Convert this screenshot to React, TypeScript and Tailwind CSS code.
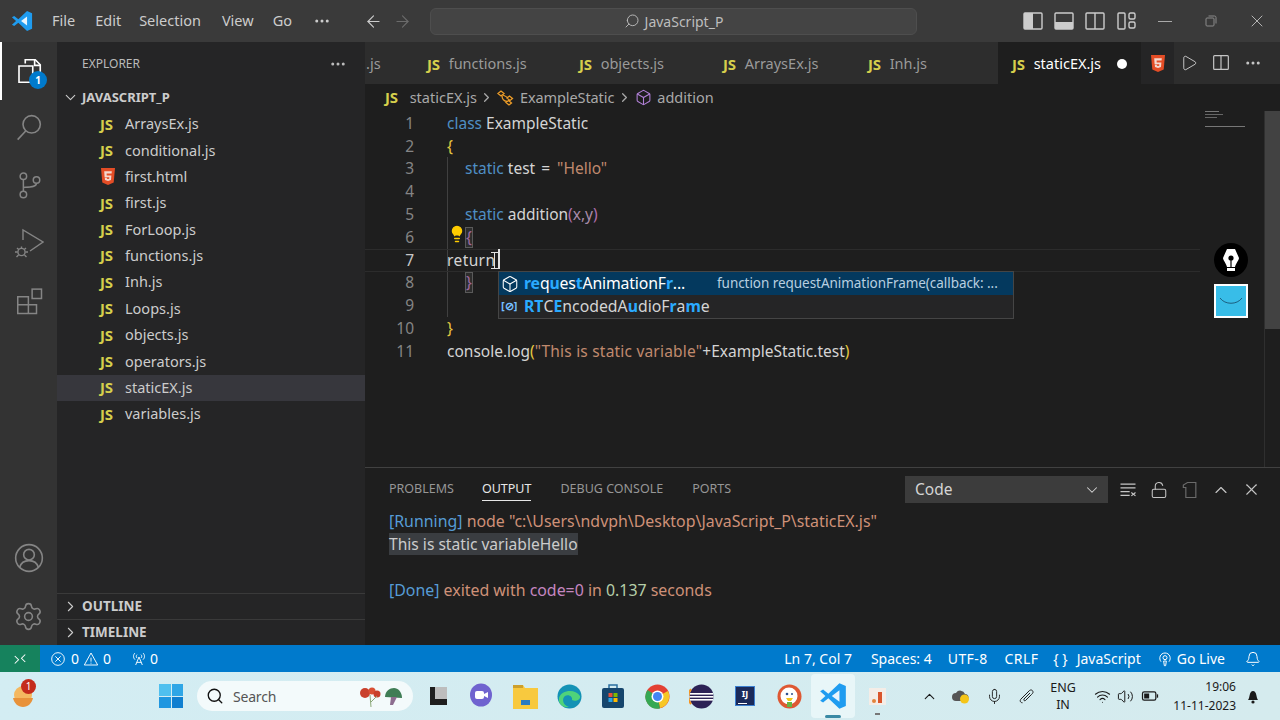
import { ReactNode } from "react";
import { Search, X, ChevronDown, ChevronRight, ChevronUp, ArrowLeft, ArrowRight, Ellipsis, Play, Bell, LockOpen, Mic, Wifi, Volume2, Lightbulb, Box, Settings } from "lucide-react";

const UI = "font-['Noto_Sans','Open_Sans',sans-serif]";

const Js = ({ className = "" }: { className?: string }) => (
  <span className={`font-bold text-[15px] leading-none text-[#d6cf4c] tracking-[-0.3px] ${className}`}>JS</span>
);

const Html5 = () => (
  <svg width="16" height="17" viewBox="0 0 16 17">
    <path d="M1 0h14l-1.3 14.6L8 17l-5.7-2.4z" fill="#e44d26" />
    <path d="M4.2 3.2h7.6l-.2 2.2H6.6l.1 2h4.7l-.4 4.6L8 13l-3-1-.2-2.3h2l.1 1 1.1.3 1.2-.3.1-1.5H4.6z" fill="#f4d9cf" />
  </svg>
);

const files = ["ArraysEx.js", "conditional.js", "first.html", "first.js", "ForLoop.js", "functions.js", "Inh.js", "Loops.js", "objects.js", "operators.js", "staticEX.js", "variables.js"];
const tabs = [
  { name: "functions.js", w: "w-[152px]" },
  { name: "objects.js", w: "w-[144px]" },
  { name: "ArraysEx.js", w: "w-[145px]" },
  { name: "Inh.js", w: "w-[144px]" },
];

const K = ({ c, children }: { c: string; children: ReactNode }) => <span style={{ color: c }}>{children}</span>;
const B = ({ children }: { children: ReactNode }) => <span className="font-bold text-[#2aaaff]">{children}</span>;

const blue = "#4f8fc4";
const str = "#c08a6e";
const pink = "#b070b0";
const gold = "#e6c940";
const txt = "#d4d4d4";

const Matched = ({ children }: { children: ReactNode }) => (
  <span className="border border-[#5a5a5a] bg-[#2d2d2d] text-[#a06aa0] leading-[19px] inline-block">{children}</span>
);

const code: { n: number; pad?: string; body: ReactNode }[] = [
  { n: 1, body: <><K c={blue}>class</K> ExampleStatic</> },
  { n: 2, body: <K c={gold}>{"{"}</K> },
  { n: 3, pad: "pl-[18px]", body: <><K c={blue}>static</K> test<span className="mx-[2px]"> = </span><span className="ml-[1px]" style={{ color: str }}>"Hello"</span></> },
  { n: 4, body: "" },
  { n: 5, pad: "pl-[18px]", body: <><K c={blue}>static</K> addition<K c={pink}>(</K><K c="#a78aa8">x,y</K><K c={pink}>)</K></> },
  { n: 6, pad: "pl-[18px]", body: <Matched>{"{"}</Matched> },
  { n: 7, body: <span className="tracking-[0.4px]">return</span> },
  { n: 8, pad: "pl-[18px]", body: <Matched>{"}"}</Matched> },
  { n: 9, body: "" },
  { n: 10, body: <K c={gold}>{"}"}</K> },
  { n: 11, body: <>console.log<K c={gold}>(</K><span className="tracking-[0.2px]" style={{ color: str }}>"This is static variable"</span>+ExampleStatic.test<K c={gold}>)</K></> },
];

const Stroke = ({ size = 24, w = 1.4, children, className = "" }: { size?: number; w?: number; children: ReactNode; className?: string }) => (
  <svg width={size} height={size} viewBox="0 0 24 24" fill="none" stroke="currentColor" strokeWidth={w} className={className}>
    {children}
  </svg>
);

const VsLogo = ({ size = 22 }: { size?: number }) => (
  <svg width={size} height={size} viewBox="0 0 24 24">
    <path d="M17.5 1 8 10 3.5 6.5 1 8l4.5 4L1 16l2.5 1.5L8 14l9.5 9 5.5-2.5v-17z" fill="#1f9cf0" />
    <path d="M17.5 7 11 12l6.5 5z" fill="#fff" opacity="0.9" />
  </svg>
);

const ActivityBar = () => (
  <div className="w-[57px] shrink-0 bg-[#333333] flex flex-col items-center text-[#858585] relative">
    <div className="absolute left-0 top-0 w-[2px] h-[58px] bg-white" />
    <div className="h-[56px] pt-[2px] flex items-center justify-center text-white relative w-full">
      <Stroke size={30} w={1.3}>
        <path d="M9 6V3h8l4 4v11h-6" />
        <path d="M16.5 3v4.5H21" />
        <path d="M15 8v13H4V8z" />
      </Stroke>
      <span className="absolute left-[29px] top-[29px] w-[18px] h-[18px] rounded-full bg-[#007acc] text-white text-[10px] font-bold flex items-center justify-center">1</span>
    </div>
    <div className="h-[58px] flex items-center justify-center">
      <Stroke size={32} w={1.2}>
        <circle cx="14" cy="10" r="6.5" />
        <path d="M9.5 15 3.5 21.5" />
      </Stroke>
    </div>
    <div className="h-[58px] flex items-center justify-center">
      <Stroke size={30} w={1.2}>
        <circle cx="7.5" cy="5" r="2.6" />
        <circle cx="7.5" cy="19.5" r="2.6" />
        <circle cx="18" cy="8" r="2.6" />
        <path d="M7.5 7.6v9.3M18 10.6c0 3-5 3-10.5 3.4" />
      </Stroke>
    </div>
    <div className="h-[58px] flex items-center justify-center">
      <svg width="30" height="30" viewBox="0 0 30 30" fill="none" stroke="currentColor" strokeWidth="1.4">
        <path d="M9 12V2l20 12-13 9" />
        <circle cx="7.5" cy="24" r="3.6" />
        <path d="M7.5 18.5v2M3 20l1.7 1.5M12 20l-1.7 1.5M1 24h2.5M11.5 24H14M2.5 29l2-2M12.5 29l-2-2" />
      </svg>
    </div>
    <div className="h-[58px] flex items-center justify-center">
      <Stroke size={30} w={1.2}>
        <path d="M3 8.5h8.5V15H18v7H3zM3 15h8.5v7" />
        <rect x="14.5" y="2.5" width="7.5" height="7.5" />
      </Stroke>
    </div>
    <div className="flex-1" />
    <div className="h-[58px] flex items-center justify-center">
      <Stroke size={32} w={1.2}>
        <circle cx="12" cy="12" r="10" />
        <circle cx="12" cy="9.5" r="4" />
        <path d="M5 19c1-3.5 4-5 7-5s6 1.5 7 5" />
      </Stroke>
    </div>
    <div className="h-[58px] flex items-center justify-center">
      <Settings size={31} strokeWidth={1.2} />
    </div>
  </div>
);

const Sidebar = () => (
  <div className="w-[308px] shrink-0 bg-[#252526] flex flex-col text-[#cccccc]">
    <div className="h-[42px] flex items-center justify-between pt-[2px] pl-[25px] pr-[18px] text-[12px] text-[#bbbbbb]">
      <span>EXPLORER</span>
      <Ellipsis size={18} />
    </div>
    <div className="h-[26px] pt-[1px] flex items-center pl-[5px] font-bold text-[13px]">
      <ChevronDown size={17} strokeWidth={1.5} className="mr-[3px]" />
      <span>JAVASCRIPT_P</span>
    </div>
    <div className="flex flex-col pt-[1px]">
      {files.map((f) => (
        <div key={f} className={`h-[26.36px] flex items-center pl-[43px] text-[14.5px] ${f === "staticEX.js" ? "bg-[#37373d]" : ""}`}>
          <span className="w-[25px] flex items-center">{f.endsWith("html") ? <Html5 /> : <Js />}</span>
          <span>{f}</span>
        </div>
      ))}
    </div>
    <div className="flex-1" />
    <div className="h-[26px] border-t border-[#3a3a3a] flex items-center pl-[5px] font-bold text-[13.5px]">
      <ChevronRight size={17} strokeWidth={1.5} className="mr-[3px]" />
      OUTLINE
    </div>
    <div className="h-[26px] border-t border-[#3a3a3a] flex items-center pl-[5px] font-bold text-[13.5px]">
      <ChevronRight size={17} strokeWidth={1.5} className="mr-[3px]" />
      TIMELINE
    </div>
  </div>
);

const TabBar = () => (
  <div className="h-[42px] bg-[#2d2d2d] flex items-center text-[14.5px] text-[#9a9a9a] shrink-0">
    <div className="w-[48px] h-full flex items-center pl-[1px] pt-[2px]">.js</div>
    {tabs.map((t) => (
      <div key={t.name} className={`${t.w} h-full flex items-center pl-[14px] pt-[2px]`}>
        <Js className="mr-[9px]" />
        {t.name}
      </div>
    ))}
    <div className="w-[143px] h-full bg-[#1e1e1e] flex items-center pl-[14px] pt-[2px] text-white">
      <Js className="mr-[9px]" />
      staticEX.js
      <span className="ml-[16px] w-[10px] h-[10px] rounded-full bg-white" />
    </div>
    <div className="w-[33px] h-full bg-[#252526] flex items-center justify-center"><Html5 /></div>
    <div className="flex-1 flex items-center text-[#c5c5c5] pl-[6px] gap-[12px]">
      <Play size={18} strokeWidth={1.3} />
      <Stroke size={22} w={1.3}>
        <rect x="4" y="4" width="16" height="15" rx="1" />
        <path d="M12 4v15" />
      </Stroke>
      <Ellipsis size={18} />
    </div>
  </div>
);

const Breadcrumb = () => (
  <div className="h-[27px] flex items-center pl-[20px] text-[14.5px] text-[#a9a9a9] shrink-0">
    <Js className="mr-[12px]" />
    staticEX.js
    <ChevronRight size={15} className="mx-[2px]" />
    <svg width="18" height="16" viewBox="0 0 18 16" fill="none" stroke="#ee9d28" strokeWidth="1.3" className="mr-[3px]">
      <path d="M2 3.5 5 1l3 2.5L5 6zM11 8l2.5-2 3 2.5-2.5 2zM10 12.5l2.5-2 3 2.5-2.5 2z" />
      <path d="M7 5c2 1 3 1.5 4.5 2.5M6 5.5c0 3 2 5.5 5 6" />
    </svg>
    <span className="ml-[3px] tracking-[-0.1px]">ExampleStatic</span>
    <ChevronRight size={15} className="mx-[3px]" />
    <Box size={17} strokeWidth={1.5} className="text-[#b180d7] mr-[5px]" />
    addition
  </div>
);

const Suggest = () => (
  <div className="absolute left-[133px] top-[160px] w-[516px] h-[48px] bg-[#252526] border border-[#454545] text-[15.8px] text-[#d4d4d4] z-10">
    <div className="h-[23px] bg-[#04395e] flex items-center whitespace-nowrap text-white">
      <Box size={18} strokeWidth={1.4} className="ml-[2px] mr-[5px] shrink-0" />
      <span className="w-[193px] shrink-0 tracking-[-0.15px]"><B>re</B>q<B>u</B>es<B>t</B>AnimationF<B>r</B>...</span>
      <span className="text-[13.5px] tracking-[-0.05px] text-[#b8cfe0]">function requestAnimationFrame(callback: ...</span>
    </div>
    <div className="h-[23px] flex items-center whitespace-nowrap">
      <span className="w-[18px] ml-[2px] mr-[5px] text-[#75beff] text-[11px] font-bold">[⊘]</span>
      <span><B>RT</B>C<B>E</B>ncodedA<B>u</B>dioF<B>r</B>a<B>m</B>e</span>
    </div>
  </div>
);

const Editor = () => (
  <div className="flex-1 relative bg-[#1e1e1e] overflow-hidden">
    {/* indent guide */}
    <div className="absolute left-[82px] top-[46px] w-[1px] h-[160px] bg-[#404040]" />
    <div className="relative flex flex-col pt-[1px] text-[15.5px] whitespace-nowrap" style={{ color: txt }}>
      {code.map((l) => (
        <div key={l.n} className={`h-[22.8px] flex items-center ${l.n === 7 ? "border-y border-[#2c2c2c] w-[835px]" : ""}`}>
          <span className={`w-[49px] text-right ${l.n === 7 ? "text-[#c6c6c6]" : "text-[#858585]"}`}>{l.n}</span>
          <span className={`ml-[33px] ${l.pad ?? ""}`}>{l.body}</span>
        </div>
      ))}
    </div>
    {/* lightbulb + text cursor + mouse i-beam */}
    <Lightbulb size={18} strokeWidth={2} className="absolute left-[83px] top-[114px] text-[#ffcc00] fill-[#ffcc00]" />
    <div className="absolute left-[133px] top-[138px] w-[2px] h-[20px] bg-[#e0e0e0]" />
    <div className="absolute left-[126px] top-[141px] w-[7px] h-[17px] border-y border-[#e0e0e0] flex justify-center">
      <div className="w-[1px] h-full bg-[#e0e0e0]" />
    </div>
    <Suggest />
    {/* minimap */}
    <div className="absolute left-[840px] top-[0px] w-[40px] h-[16px] flex flex-col gap-[2px]">
      <div className="w-[14px] h-[1px] bg-[#777]" />
      <div className="w-[18px] h-[1px] bg-[#666]" />
      <div className="w-[12px] h-[1px] bg-[#666]" />
      <div className="w-[40px] h-[1px] mt-[6px] bg-[#777]" />
    </div>
    {/* floating widgets */}
    <div className="absolute left-[849px] top-[132px] w-[34px] h-[34px] rounded-full bg-black flex items-center justify-center">
      <svg width="18" height="24" viewBox="0 0 18 24">
        <path d="M5 1h8l4 9c0 2-3 5-4 9H5C4 15 1 12 1 10z" fill="#fff" />
        <rect x="5" y="20" width="8" height="3" fill="#fff" />
        <circle cx="9" cy="10" r="2.6" fill="#000" />
        <path d="M8.4 11h1.2v8H8.4z" fill="#000" />
      </svg>
    </div>
    <div className="absolute left-[849px] top-[173px] w-[34px] h-[34px] bg-[#38bde8] border-2 border-white flex items-center justify-center">
      <svg width="26" height="10" viewBox="0 0 26 10" fill="none" stroke="#1c5f80" strokeWidth="1"><path d="M2 2c5 7 17 7 22 0" /></svg>
    </div>
    {/* scrollbar */}
    <div className="absolute right-0 top-0 h-full w-[16px] border-l border-[#2f2f2f]">
      <div className="h-[218px] bg-[#424242]" />
    </div>
  </div>
);

const Panel = () => (
  <div className="h-[178px] shrink-0 bg-[#1e1e1e] border-t border-[#414141] flex flex-col">
    <div className="h-[43px] shrink-0 flex items-center pl-[24px] text-[12.5px] text-[#969696] relative">
      <span className="mr-[28px]">PROBLEMS</span>
      <span className="mr-[29px] text-[#e7e7e7] border-b border-[#e7e7e7] pb-[2px] translate-y-[1px]">OUTPUT</span>
      <span className="mr-[29px]">DEBUG CONSOLE</span>
      <span>PORTS</span>
      <div className="ml-auto flex items-center text-[#c5c5c5]">
        <div className="w-[203px] h-[27px] bg-[#3c3c3c] flex items-center justify-between pl-[10px] pr-[7px] text-[15.5px] text-[#d4d4d4] mr-[4px]">
          <span>Code</span>
          <ChevronDown size={18} strokeWidth={1.4} />
        </div>
        <div className="w-[31px] flex justify-center">
          <Stroke size={20} w={1.4}>
            <path d="M3 5h18M3 9.5h18M3 14h11M3 18.5h11M16 15l5 4M21 15l-5 4" />
          </Stroke>
        </div>
        <div className="w-[31px] flex justify-center"><LockOpen size={18} strokeWidth={1.4} /></div>
        <div className="w-[31px] flex justify-center text-[#6b6b6b]">
          <Stroke size={20} w={1.4}>
            <path d="M9 3h10v18H7V9H4V6z" />
          </Stroke>
        </div>
        <div className="w-[31px] flex justify-center"><ChevronUp size={20} strokeWidth={1.4} /></div>
        <div className="w-[31px] flex justify-center mr-[13px]"><X size={19} strokeWidth={1.4} /></div>
      </div>
    </div>
    <div className="-mt-[1px] pl-[24px] text-[15.9px] leading-[23px] text-[#ce9178] whitespace-nowrap">
      <div><K c="#569cd6">[Running]</K> node "c:\Users\ndvph\Desktop\JavaScript_P\staticEX.js"</div>
      <div><span className="bg-[#3a3d41] text-[#cccccc] text-[15.6px]">This is static variableHello</span></div>
      <div className="h-[23px]" />
      <div><K c="#569cd6">[Done]</K> exited with <K c="#c586c0">code=0</K> in <K c="#b5cea8">0.137</K> seconds</div>
    </div>
  </div>
);

const StatusBar = () => (
  <div className="h-[27px] shrink-0 bg-[#007acc] text-white text-[14px] flex items-center">
    <div className="w-[40px] h-full bg-[#16825d] flex items-center justify-center">
      <Stroke size={18} w={1.4}>
        <path d="M5 8l5 5-5 5M19 6l-5 5 5 5" />
      </Stroke>
    </div>
    <div className="flex items-center pl-[10px]">
      <Stroke size={16} w={1.4}><circle cx="12" cy="12" r="9.5" /><path d="M8 8l8 8M16 8l-8 8" /></Stroke>
      <span className="ml-[5px]">0</span>
      <Stroke size={16} w={1.4} className="ml-[4px]"><path d="M12 3l10 18H2zM12 10v6M12 17.5v1.5" /></Stroke>
      <span className="ml-[4px]">0</span>
      <Stroke size={16} w={1.4} className="ml-[20px]"><path d="M12 9l-5 12M12 9l5 12M8.5 17h7M6 3c-3 3-3 7 0 10M18 3c3 3 3 7 0 10M9 5.5c-1.5 1.5-1.5 3.5 0 5M15 5.5c1.5 1.5 1.5 3.5 0 5" /></Stroke>
      <span className="ml-[3px]">0</span>
    </div>
    <div className="ml-auto flex items-center pr-[19px]">
      <span className="mr-[19px]">Ln 7, Col 7</span>
      <span className="mr-[16px]">Spaces: 4</span>
      <span className="mr-[17px] tracking-[0.4px]">UTF-8</span>
      <span className="mr-[15px] tracking-[0.4px]">CRLF</span>
      <span className="mr-[9px]">{"{ }"}</span>
      <span className="mr-[16px]">JavaScript</span>
      <Stroke size={16} w={1.5} className="mr-[4px]"><circle cx="12" cy="10" r="3" /><path d="M6 16c-4-5-1-13 6-13s10 8 6 13M10 15h4l-1 7h-2z" /></Stroke>
      <span className="mr-[20px]">Go Live</span>
      <Bell size={16} strokeWidth={1.5} />
    </div>
  </div>
);

const Slot = ({ children, active }: { children: ReactNode; active?: boolean }) => (
  <div className={`w-[44px] h-[44px] shrink-0 flex items-center justify-center rounded-[4px] relative ${active ? "bg-[#e8f6f8]" : ""}`}>{children}</div>
);

const Taskbar = () => (
  <div className="h-[48px] shrink-0 bg-gradient-to-r from-[#d3edf3] to-[#d5ebee] text-[#1a1a1a] flex items-center relative">
    {/* weather */}
    <div className="w-[46px] shrink-0 flex justify-center relative">
      <svg width="24" height="24" viewBox="0 0 24 24">
        <circle cx="12" cy="11" r="9" fill="#f4b860" />
        <path d="M2 14h20c-1 5-5 9-10 9S3 19 2 14z" fill="#e8923a" />
      </svg>
      <span className="absolute left-[21px] top-[-5px] w-[15px] h-[15px] rounded-full bg-[#c42b1c] text-white text-[10px] flex items-center justify-center">1</span>
    </div>
    {/* start */}
    <div className="ml-[113px] shrink-0 grid grid-cols-2 gap-[1px] w-[24px] h-[24px]">
      <div className="bg-[#4fc0ef]" />
      <div className="bg-[#2ea6e6]" />
      <div className="bg-[#1f97e0]" />
      <div className="bg-[#0f7fd0]" />
    </div>
    {/* search pill */}
    <div className="ml-[14px] w-[216px] shrink-0 h-[30px] rounded-full bg-[#f3fafb] flex items-center pl-[9px] text-[14px] text-[#555] tracking-[-0.2px]">
      <Search size={18} strokeWidth={1.8} className="text-[#111] mr-[9px]" />
      Search
      <svg width="46" height="24" viewBox="0 0 46 24" className="ml-auto mr-[10px]">
        <circle cx="8" cy="9" r="5" fill="#c9402c" />
        <circle cx="15" cy="7" r="3.5" fill="#d94f33" />
        <circle cx="20" cy="10" r="3.5" fill="#c9402c" />
        <path d="M13 11l1 12M20 12l-6 6" stroke="#8aa878" fill="none" />
        <path d="M28 13c0-6 5-9 9-9 4 0 8 4 8 10z" fill="#3f7d55" />
        <path d="M34 13h6l-4 8h-3z" fill="#8c6d8f" />
      </svg>
    </div>
    <div className="ml-[2px] flex items-center">
      <Slot>
        <div className="w-[17px] h-[18px] relative bg-[#1e1e1e] ml-[2px]"><div className="absolute right-0 top-0 w-[12px] h-[12px] bg-[#bdbdbd]" /></div>
      </Slot>
      <Slot>
        <svg width="24" height="26" viewBox="0 0 24 26"><ellipse cx="12" cy="12" rx="11" ry="11.5" fill="#6f63cf" /><rect x="6" y="8" width="9" height="8" rx="2" fill="#fff" /><path d="M15 11l4-2v6l-4-2z" fill="#fff" /></svg>
      </Slot>
      <Slot>
        <svg width="25" height="25" viewBox="0 0 25 25"><path d="M0 1h10l2 3h13v21H0z" fill="#f8c93e" /><rect x="8" y="16" width="9" height="5" fill="#2a7bc2" /><rect x="0" y="1" width="10" height="3" fill="#cda02c" /></svg>
      </Slot>
      <Slot>
        <svg width="25" height="25" viewBox="0 0 25 25"><circle cx="12.5" cy="12.5" r="12" fill="#1392b5" /><path d="M2 14C4 6 18 4 23 12c1 4-5 6-8 4 1-3-3-6-7-4-3 2-3 9 4 11-6 1-11-3-10-9z" fill="#4fd37a" /></svg>
      </Slot>
      <Slot>
        <svg width="24" height="26" viewBox="0 0 24 26"><path d="M8 5V2h8v3" fill="none" stroke="#2b6fa0" strokeWidth="1.5" /><rect x="1" y="5" width="22" height="20" rx="2" fill="#16466d" /><rect x="7.5" y="10" width="4" height="4" fill="#e8503a" /><rect x="12.5" y="10" width="4" height="4" fill="#7fba00" /><rect x="7.5" y="15" width="4" height="4" fill="#2aa5e8" /><rect x="12.5" y="15" width="4" height="4" fill="#ffb900" /></svg>
      </Slot>
      <Slot>
        <svg width="25" height="25" viewBox="0 0 25 25"><circle cx="12.5" cy="12.5" r="12" fill="#e34133" /><path d="M12.5 12.5 23 7a12 12 0 0 1-8 17z" fill="#f7c726" /><path d="M12.5 12.5 15 24.5A12 12 0 0 1 2.5 6z" fill="#35a853" /><circle cx="12.5" cy="12.5" r="6" fill="#fff" /><circle cx="12.5" cy="12.5" r="4.5" fill="#4285f4" /></svg>
      </Slot>
      <Slot>
        <svg width="25" height="25" viewBox="0 0 25 25"><circle cx="12.5" cy="12.5" r="12" fill="#2c2255" /><path d="M2 5a12 12 0 0 0 0 15" fill="none" stroke="#f7941e" strokeWidth="2" /><rect x="1" y="9" width="23" height="1.6" fill="#fff" /><rect x="0.5" y="12" width="24" height="1.6" fill="#fff" /><rect x="1" y="15" width="23" height="1.6" fill="#fff" /></svg>
      </Slot>
      <Slot>
        <div className="w-[20px] h-[20px] bg-[#1a2a5a] border border-[#3b7fd0] text-white text-[9px] font-bold flex flex-col items-center leading-none pt-[2px]">IJ<div className="w-[9px] h-[1px] bg-white mt-[5px] self-start ml-[2px]" /></div>
      </Slot>
      <Slot>
        <svg width="25" height="25" viewBox="0 0 25 25"><circle cx="12.5" cy="12.5" r="12" fill="#de5833" /><circle cx="12" cy="12" r="8.5" fill="#fff" /><circle cx="10" cy="10" r="1.3" fill="#2d4f8e" /><circle cx="15" cy="10" r="1" fill="#2d4f8e" /><path d="M9 14h7l-2 3h-3z" fill="#f5c518" /><path d="M10 18h5v5h-5z" fill="#68b344" /></svg>
      </Slot>
      <Slot active>
        <VsLogo size={28} />
        <div className="absolute bottom-[0px] left-[14px] w-[16px] h-[3px] rounded bg-[#3a8aa5]" />
      </Slot>
      <Slot>
        <div className="w-[17px] h-[17px] bg-[#f4ede7] flex items-end justify-center gap-[2px] pb-[2px]">
          <div className="w-[4px] h-[4px] rounded-full bg-[#e2843b]" />
          <div className="w-[4px] h-[11px] bg-[#d9552b]" />
        </div>
        <div className="absolute bottom-[3px] left-[20px] w-[5px] h-[2px] bg-[#777]" />
      </Slot>
    </div>
    <div className="ml-auto flex items-center pr-[20px]">
      <ChevronUp size={17} strokeWidth={1.6} className="mr-[14px]" />
      <svg width="18" height="16" viewBox="0 0 18 16" className="mr-[16px]"><path d="M4 13a4 4 0 0 1 0-8 5 5 0 0 1 9 1 3.5 3.5 0 0 1 0 7z" fill="#555" /><circle cx="12.5" cy="11" r="4.5" fill="#f5c518" /></svg>
      <Mic size={17} strokeWidth={1.3} className="mr-[15px]" />
      <Stroke size={18} w={1.3} className="mr-[8px]"><path d="M6 21c-3 0-4-3-2-5L15 5c2-2 5-1 5 2 0 1-1 2-2 3l-8 8c-1 1-3 0-2-2l8-8" /></Stroke>
      <div className="w-[38px] text-center text-[12.5px] leading-[17px] mr-[12px]">ENG<br />IN</div>
      <Wifi size={17} strokeWidth={1.5} className="mr-[6px]" />
      <Volume2 size={17} strokeWidth={1.4} className="mr-[6px]" />
      <Stroke size={20} w={1.5} className="mr-[6px]"><rect x="3" y="7" width="16" height="10" rx="2" /><rect x="5" y="9" width="6" height="6" fill="currentColor" stroke="none" /><path d="M21 10v4" /></Stroke>
      <div className="w-[70px] text-right text-[12px] leading-[19px] mr-[10px]">19:06<br />11-11-2023</div>
      <svg width="14" height="18" viewBox="0 0 14 18"><path d="M2 13c2-2 1-9 5-9s3 7 5 9z" fill="#1a1a1a" /><circle cx="7" cy="15" r="1.6" fill="#1a1a1a" /></svg>
    </div>
  </div>
);

const App = () => (
  <div className={`w-[1280px] h-[720px] overflow-hidden flex flex-col bg-[#1e1e1e] ${UI}`}>
    <div className="h-[42px] shrink-0 bg-[#3a3a3a] flex items-center text-[14.5px] text-[#cccccc]">
      <div className="w-[44px] flex justify-center"><VsLogo /></div>
      <div className="flex items-center">
        <span className="ml-[8px]">File</span>
        <span className="ml-[20px]">Edit</span>
        <span className="ml-[18px]">Selection</span>
        <span className="ml-[21px]">View</span>
        <span className="ml-[19px]">Go</span>
        <Ellipsis size={18} className="ml-[21px]" />
      </div>
      <ArrowLeft size={19} strokeWidth={1.4} className="ml-[33px]" />
      <ArrowRight size={19} strokeWidth={1.4} className="ml-[10px] text-[#6b6b6b]" />
      <div className="ml-[18px] w-[487px] h-[27px] rounded-[6px] bg-[#444444] border border-[#4e4e4e] flex items-center justify-center text-[14px] text-[#bdbdbd]">
        <Search size={16} strokeWidth={1.4} className="mr-[5px] -scale-x-100" />
        JavaScript_P
      </div>
      <div className="ml-auto flex items-center text-[#cccccc]">
        <svg width="20" height="18" viewBox="0 0 20 18" className="mr-[11px]"><rect x="1" y="1" width="18" height="16" rx="1" fill="none" stroke="currentColor" strokeWidth="1.4" /><rect x="1" y="1" width="9" height="16" fill="currentColor" /></svg>
        <svg width="20" height="18" viewBox="0 0 20 18" className="mr-[11px]"><rect x="1" y="1" width="18" height="16" rx="1" fill="none" stroke="currentColor" strokeWidth="1.4" /><rect x="1" y="10" width="18" height="7" fill="currentColor" /></svg>
        <svg width="20" height="18" viewBox="0 0 20 18" className="mr-[12px]"><rect x="1" y="1" width="18" height="16" rx="1" fill="none" stroke="currentColor" strokeWidth="1.4" /><path d="M10 1v16" stroke="currentColor" strokeWidth="1.4" /></svg>
        <svg width="20" height="18" viewBox="0 0 20 18" fill="none" stroke="currentColor" strokeWidth="1.4" className="mr-[21px]"><rect x="1" y="1" width="7" height="16" rx="1" /><rect x="12" y="1" width="6" height="6" rx="1.5" /><rect x="12" y="10" width="6" height="6" rx="1.5" /></svg>
        <div className="w-[14px] h-[1px] bg-[#a9a9a9] mr-[33px]" />
        <svg width="12" height="12" viewBox="0 0 12 12" fill="none" stroke="#8a8a8a" strokeWidth="1" className="mr-[30px]"><rect x="1" y="3" width="8" height="8" rx="1" /><path d="M3.5 1h6a1.5 1.5 0 0 1 1.5 1.5v6" /></svg>
        <X size={20} strokeWidth={1} className="mr-[13px]" />
      </div>
    </div>
    <div className="flex flex-1 min-h-0">
      <ActivityBar />
      <Sidebar />
      <div className="flex-1 flex flex-col min-w-0">
        <TabBar />
        <Breadcrumb />
        <Editor />
        <Panel />
      </div>
    </div>
    <StatusBar />
    <Taskbar />
  </div>
);

export default App;
